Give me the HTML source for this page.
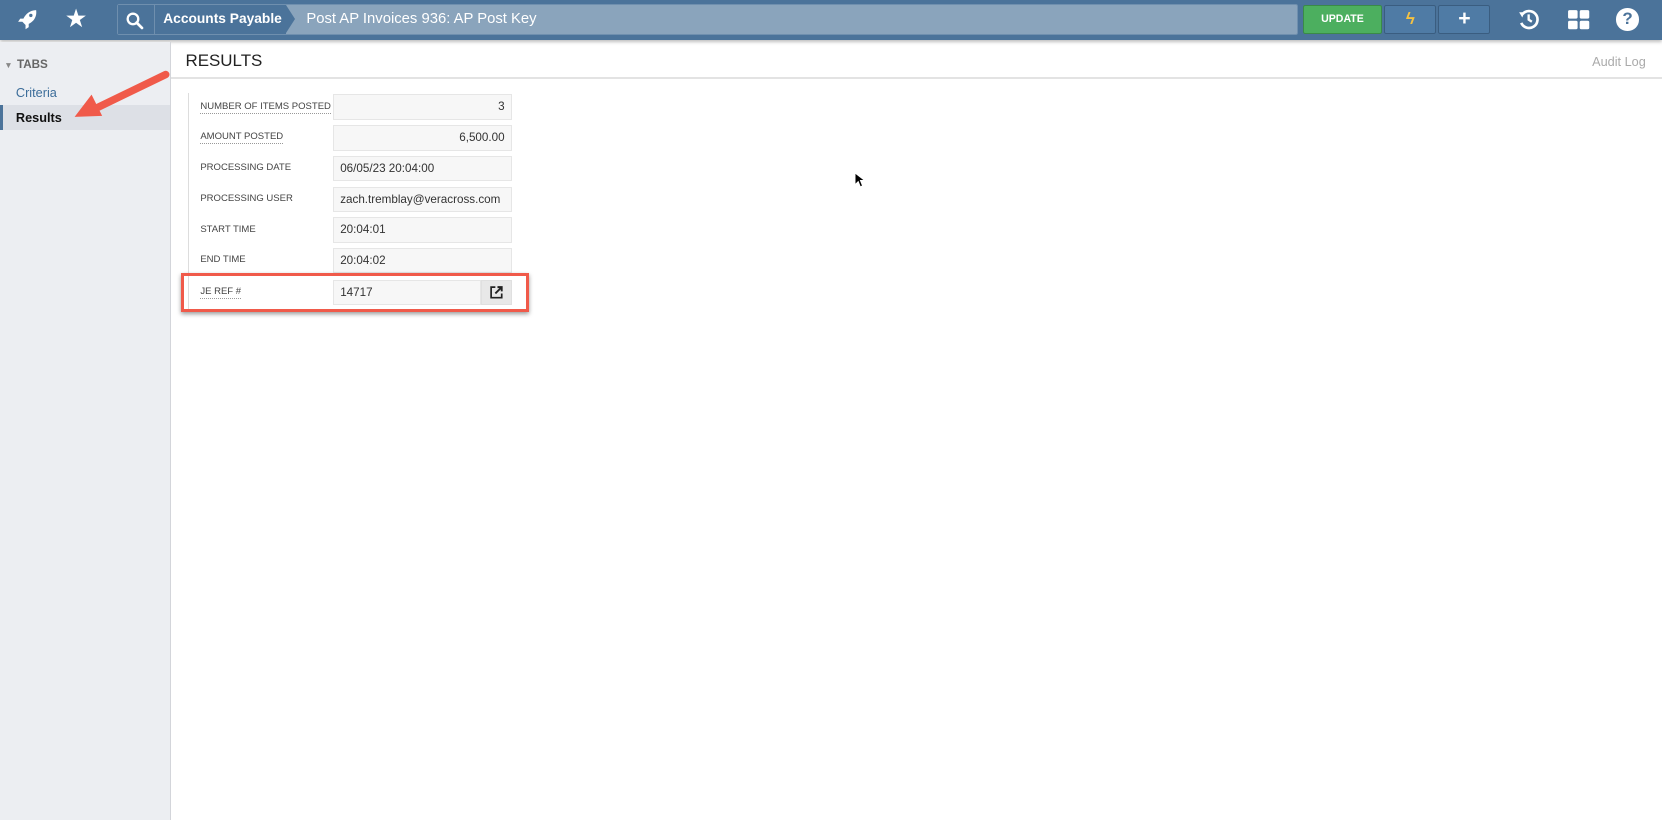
<!DOCTYPE html>
<html><head><style>
body{margin:0;width:1662px;height:820px;overflow:hidden;background:#fff;font-family:"Liberation Sans",sans-serif;}
#w{zoom:1.06;width:1568px;height:774px;position:relative;}
.a{position:absolute}
.top{left:0;top:0;width:1568px;height:38px;background:#4b739a;box-shadow:0 2px 3px rgba(0,0,0,.25);}
.bc{left:110px;top:4px;width:1115px;height:29px;border:1px solid #6f8fae;background:#8aa4bc;border-radius:2px;box-sizing:border-box}
.lbl{font-size:9px;color:#444;left:189px;border-bottom:1px dotted #999;padding-bottom:1px;white-space:nowrap}
.f{left:314px;width:169px;height:24px;background:#f7f7f7;border:1px solid #e6e6e6;box-sizing:border-box;font-size:11px;color:#333;padding:0 6px;line-height:22px}
.btn{top:5px;height:27px;border:1px solid #3a5d80;border-radius:2px;box-sizing:border-box;background:#4f7ba5;color:#fff;text-align:center;line-height:25px;font-weight:bold}
</style></head><body><div id="w">
<div class="a top"></div>
<svg class="a" style="left:15px;top:8px" width="22" height="22" viewBox="0 0 22 22"><path d="M19 2C13 2 9 6 7 10L4 10 2 13 6 13 9 16 9 20 12 18 12 15C16 13 20 9 19 2Z" fill="#fff"/><circle cx="14" cy="7" r="1.6" fill="#4b739a"/></svg>
<div class="a" style="left:61px;top:3px;color:#fff;font-size:24px">★</div>
<div class="a bc"></div>
<div class="a" style="left:111px;top:5px;width:34px;height:27px;background:#4b739a;border-right:1px solid #6f8fae"></div>
<svg class="a" style="left:118px;top:10px" width="18" height="18" viewBox="0 0 18 18"><circle cx="7.5" cy="7.5" r="5" stroke="#fff" stroke-width="2.2" fill="none"/><path d="M11 11L16 16" stroke="#fff" stroke-width="2.6" stroke-linecap="round"/></svg>
<div class="a" style="left:146px;top:5px;width:124px;height:27px;background:#4b739a"></div>
<div class="a" style="left:270px;top:5px;width:0;height:0;border-top:13.5px solid transparent;border-bottom:13.5px solid transparent;border-left:9px solid #4b739a"></div>
<div class="a" style="left:154px;top:10px;color:#fff;font-size:13px;font-weight:bold">Accounts Payable</div>
<div class="a" style="left:289px;top:10px;color:#fff;font-size:14px">Post AP Invoices 936: AP Post Key</div>
<div class="a btn" style="left:1229px;width:75px;background:#4caf5f;border-color:#3a8a48;font-size:10px;line-height:26px">UPDATE</div>
<div class="a btn" style="left:1306px;width:49px;color:#f5c242;font-size:16px">ϟ</div>
<div class="a btn" style="left:1357px;width:49px;font-size:20px">+</div>
<svg class="a" style="left:1431px;top:8px" width="22" height="22" viewBox="0 0 22 22"><path d="M5 6A8 8 0 1 1 4 14" stroke="#fff" stroke-width="2.5" fill="none"/><path d="M2 4L7 4 5 9Z" fill="#fff"/><path d="M11 6V11L14 13" stroke="#fff" stroke-width="2.2" fill="none"/></svg>
<svg class="a" style="left:1478px;top:8px" width="22" height="22" viewBox="0 0 22 22"><rect x="1" y="2" width="9" height="8" rx="1.5" fill="#fff"/><rect x="12" y="2" width="9" height="8" rx="1.5" fill="#fff"/><rect x="1" y="12" width="9" height="8" rx="1.5" fill="#fff"/><rect x="12" y="12" width="9" height="8" rx="1.5" fill="#fff"/></svg>
<div class="a" style="left:1525px;top:8px;width:21px;height:21px;border-radius:50%;background:#fff;color:#4b739a;font-weight:bold;text-align:center;line-height:21px;font-size:16px">?</div>
<div class="a" style="left:0;top:40px;width:160px;height:734px;background:#eceef2;border-right:1px solid #d3d5da"></div>
<div class="a" style="left:4px;top:57px;font-size:8px;color:#888">▼</div>
<div class="a" style="left:16px;top:55px;font-size:11px;font-weight:bold;color:#666">TABS</div>
<div class="a" style="left:15px;top:80px;font-size:12px;color:#3c6d9a">Criteria</div>
<div class="a" style="left:0;top:99px;width:160px;height:24px;background:#dde0e6;border-left:3px solid #4b739a;box-sizing:border-box"></div>
<div class="a" style="left:15px;top:104px;font-size:12px;font-weight:bold;color:#111">Results</div>
<div class="a" style="left:175px;top:48px;font-size:16px;color:#222">RESULTS</div>
<div class="a" style="left:161px;top:73px;width:1407px;height:2px;background:#e3e3e3"></div>
<div class="a" style="left:1502px;top:51px;font-size:12px;color:#aaa">Audit Log</div>
<div class="a" style="left:177px;top:88px;width:1px;height:205px;background:#ddd"></div>
<div class="a lbl" style="top:95px">NUMBER OF ITEMS POSTED</div><div class="a f" style="top:89px;text-align:right">3</div>
<div class="a lbl" style="top:124px">AMOUNT POSTED</div><div class="a f" style="top:118px;text-align:right">6,500.00</div>
<div class="a lbl" style="top:153px;border:0">PROCESSING DATE</div><div class="a f" style="top:147px">06/05/23 20:04:00</div>
<div class="a lbl" style="top:182px;border:0">PROCESSING USER</div><div class="a f" style="top:176px">zach.tremblay@veracross.com</div>
<div class="a lbl" style="top:211px;border:0">START TIME</div><div class="a f" style="top:205px">20:04:01</div>
<div class="a lbl" style="top:240px;border:0">END TIME</div><div class="a f" style="top:234px">20:04:02</div>
<div class="a lbl" style="top:270px">JE REF #</div><div class="a f" style="top:264px;width:140px">14717</div>
<div class="a" style="left:454px;top:264px;width:29px;height:24px;background:#e8e8e8;border:1px solid #e0e0e0;box-sizing:border-box"></div>
<svg class="a" style="left:461px;top:269px" width="14" height="14" viewBox="0 0 14 14"><path d="M6 2H2V12H12V8" stroke="#222" stroke-width="1.6" fill="none"/><path d="M6 8L12 2M8 2H12V6" stroke="#222" stroke-width="1.8" fill="none"/></svg>
<div class="a" style="left:171px;top:258px;width:328px;height:36px;border:3px solid #f05a4a;box-sizing:border-box;box-shadow:0 2px 4px rgba(0,0,0,.4)"></div>
<svg class="a" style="left:60px;top:62px" width="110" height="60" viewBox="0 0 110 60"><path d="M96 8L30 40" stroke="#f05a4a" stroke-width="7" stroke-linecap="round"/><path d="M10 48L26 27 36 47Z" fill="#f05a4a"/></svg>
<svg class="a" style="left:806px;top:162px" width="10" height="15" viewBox="0 0 10 15"><path d="M1 1V12L4 9 6 14 8 13 6 8H10Z" fill="#000" stroke="#fff" stroke-width=".8"/></svg>
</div></body></html>
